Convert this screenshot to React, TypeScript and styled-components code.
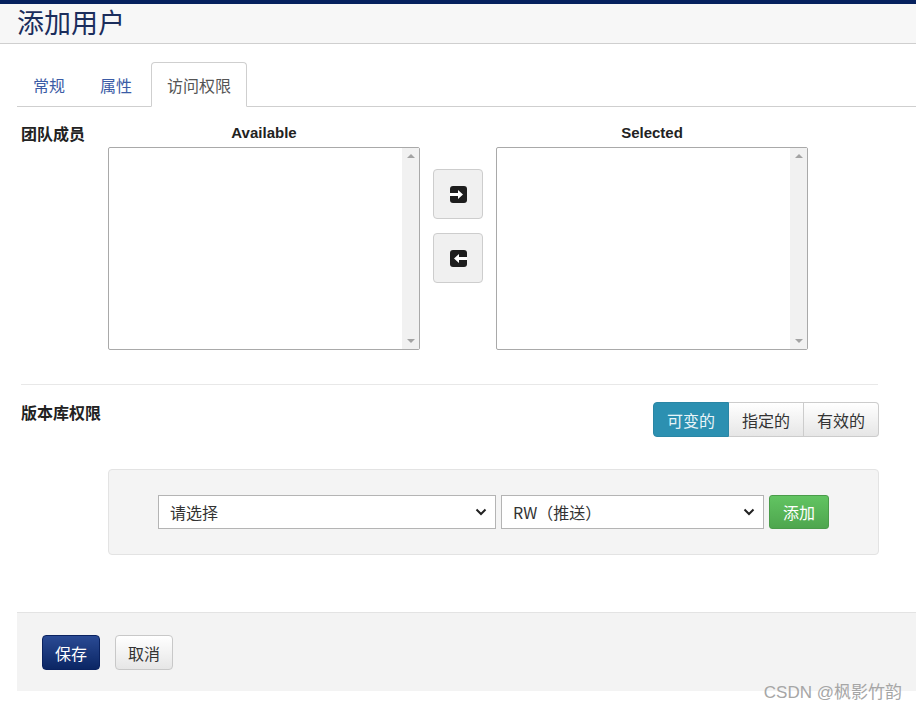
import React from "react";
import styled, { createGlobalStyle, css } from "styled-components";

const GlobalStyle = createGlobalStyle`
  html, body {
    margin: 0;
    padding: 0;
    background: #fff;
    font-family: "Liberation Sans", "Noto Sans CJK SC", sans-serif;
    color: #333;
  }
`;

const Page = styled.div`
  position: relative;
  width: 916px;
  min-height: 711px;
`;

const TopBar = styled.div`
  height: 4px;
  background: #06215e;
`;

const Header = styled.header`
  height: 39px;
  background: #f7f7f7;
  border-bottom: 1px solid #cfcfcf;
  padding-left: 17px;
  display: flex;
  align-items: center;
`;

const Title = styled.h1`
  margin: 0 0 3px;
  font-family: "Noto Sans CJK SC", sans-serif;
  font-size: 27px;
  font-weight: 400;
  line-height: 32px;
  color: #1b2d5c;
`;

const Main = styled.main`
  padding-left: 17px;
`;

const Tabs = styled.nav`
  margin-top: 18px;
  display: flex;
  border-bottom: 1px solid #cfcfcf;
`;

const Tab = styled.div<{ $active?: boolean }>`
  height: 43px;
  padding: 0 15px;
  margin-right: 3px;
  margin-bottom: -1px;
  display: flex;
  align-items: center;
  font-family: "Noto Sans CJK SC", sans-serif;
  font-size: 16px;
  color: #3b5ca6;
  border: 1px solid transparent;
  border-radius: 4px 4px 0 0;
  ${(p) =>
    p.$active &&
    css`
      color: #555;
      background: #fff;
      border-color: #cfcfcf;
      border-bottom-color: #fff;
    `}
`;

const SectionRow = styled.div`
  display: flex;
  align-items: flex-start;
  padding-top: 16px;
`;

const Label = styled.div`
  width: 87px;
  padding-left: 4px;
  font-family: "Noto Sans CJK SC", sans-serif;
  font-size: 16px;
  font-weight: 700;
  line-height: 20px;
  color: #222;
`;

const ListColumn = styled.div`
  width: 312px;
  display: flex;
  flex-direction: column;
`;

const ListTitle = styled.div`
  text-align: center;
  font-size: 15px;
  font-weight: 700;
  line-height: 20px;
  color: #222;
  margin-bottom: 4px;
`;

const ListBox = styled.div`
  height: 201px;
  border: 1px solid #a9a9a9;
  border-radius: 2px;
  background: #fff;
  display: flex;
  justify-content: flex-end;
`;

const Scrollbar = styled.div`
  width: 17px;
  background: #f1f1f1;
  display: flex;
  flex-direction: column;
  justify-content: space-between;
  align-items: center;
  padding: 6px 0;
`;

const Triangle = styled.span<{ $down?: boolean }>`
  width: 0;
  height: 0;
  border-left: 4px solid transparent;
  border-right: 4px solid transparent;
  ${(p) =>
    p.$down
      ? css`border-top: 4px solid #a3a3a3;`
      : css`border-bottom: 4px solid #a3a3a3;`}
`;

const MoveColumn = styled.div`
  width: 76px;
  display: flex;
  flex-direction: column;
  align-items: center;
  gap: 14px;
  padding-top: 46px;
`;

const MoveButton = styled.button`
  width: 50px;
  height: 50px;
  padding: 0;
  background: #f0f0f0;
  border: 1px solid #cdcdcd;
  border-radius: 4px;
  display: flex;
  align-items: center;
  justify-content: center;
`;

const Divider = styled.hr`
  margin: 34px 38px 0 4px;
  border: 0;
  border-top: 1px solid #e8e8e8;
`;

const RepoRow = styled.div`
  display: flex;
  justify-content: space-between;
  align-items: flex-start;
  padding: 17px 37px 0 0;
`;

const BtnGroup = styled.div`
  display: flex;
`;

const GroupButton = styled.button<{ $active?: boolean }>`
  height: 35px;
  padding: 0 13px;
  font-family: "Noto Sans CJK SC", sans-serif;
  font-size: 16px;
  color: #333;
  border: 1px solid #cccccc;
  border-left-width: 0;
  background: linear-gradient(#ffffff, #e6e6e6);
  &:first-child {
    border-left-width: 1px;
    border-radius: 4px 0 0 4px;
  }
  &:last-child {
    border-radius: 0 4px 4px 0;
  }
  ${(p) =>
    p.$active &&
    css`
      color: #e8f4f8;
      background: #2c90b1;
      border-color: #2a86a5;
    `}
`;

const Well = styled.div`
  margin: 32px 37px 0 91px;
  height: 84px;
  background: #f4f4f4;
  border: 1px solid #e3e3e3;
  border-radius: 4px;
  display: flex;
  align-items: center;
  justify-content: center;
  gap: 5px;
`;

const Select = styled.div<{ $width: number }>`
  width: ${(p) => p.$width}px;
  height: 34px;
  box-sizing: border-box;
  padding: 0 8px 0 11px;
  background: #fff;
  border: 1px solid #b4b4b4;
  display: flex;
  align-items: center;
  justify-content: space-between;
  font-family: "Noto Sans CJK SC", sans-serif;
  font-size: 16px;
  color: #333;
`;

const AddButton = styled.button`
  width: 60px;
  height: 34px;
  font-family: "Noto Sans CJK SC", sans-serif;
  font-size: 16px;
  color: #fff;
  background: linear-gradient(#62c462, #4ea64e);
  border: 1px solid #4a9c4a;
  border-radius: 3px;
`;

const Footer = styled.footer`
  position: relative;
  margin-top: 57px;
  height: 79px;
  background: #f3f3f3;
  border-top: 1px solid #e3e3e3;
  display: flex;
  align-items: flex-start;
  gap: 15px;
  padding: 22px 0 0 25px;
  box-sizing: border-box;
`;

const FooterButton = styled.button<{ $primary?: boolean }>`
  height: 35px;
  padding: 0 12px;
  font-family: "Noto Sans CJK SC", sans-serif;
  font-size: 16px;
  border-radius: 4px;
  color: #333;
  background: linear-gradient(#ffffff, #e6e6e6);
  border: 1px solid #c8c8c8;
  ${(p) =>
    p.$primary &&
    css`
      color: #fff;
      background: linear-gradient(#2a4a94, #0b2664);
      border-color: #0a2260;
    `}
`;

const Watermark = styled.span`
  position: absolute;
  top: 69px;
  right: 14px;
  font-family: "Liberation Sans", "Noto Sans CJK SC", sans-serif;
  font-size: 17px;
  line-height: 22px;
  color: #a6a6a6;
`;

const MoveIcon: React.FC<{ dir: "right" | "left" }> = ({ dir }) => (
  <svg width="17" height="17" viewBox="0 0 17 17">
    <rect x="0" y="0" width="17" height="17" rx="3" fill="#1d1d1d" />
    {dir === "right" ? (
      <path d="M0 7 H8 V4 L13 8.5 L8 13 V10 H0 Z" fill="#fff" />
    ) : (
      <path d="M17 7 H9 V4 L4 8.5 L9 13 V10 H17 Z" fill="#fff" />
    )}
  </svg>
);

const Chevron = () => (
  <svg width="12" height="8" viewBox="0 0 12 8">
    <path d="M1.5 1.5 L6 6 L10.5 1.5" fill="none" stroke="#222" strokeWidth="2" />
  </svg>
);

const MemberList: React.FC<{ title: string }> = ({ title }) => (
  <ListColumn>
    <ListTitle>{title}</ListTitle>
    <ListBox>
      <Scrollbar>
        <Triangle />
        <Triangle $down />
      </Scrollbar>
    </ListBox>
  </ListColumn>
);

export default function App() {
  const modes = ["可变的", "指定的", "有效的"];
  return (
    <Page>
      <GlobalStyle />
      <TopBar />
      <Header>
        <Title>添加用户</Title>
      </Header>
      <Main>
        <Tabs>
          <Tab>常规</Tab>
          <Tab>属性</Tab>
          <Tab $active>访问权限</Tab>
        </Tabs>

        <SectionRow>
          <Label>团队成员</Label>
          <MemberList title="Available" />
          <MoveColumn>
            <MoveButton>
              <MoveIcon dir="right" />
            </MoveButton>
            <MoveButton>
              <MoveIcon dir="left" />
            </MoveButton>
          </MoveColumn>
          <MemberList title="Selected" />
        </SectionRow>

        <Divider />

        <RepoRow>
          <Label>版本库权限</Label>
          <BtnGroup>
            {modes.map((m, i) => (
              <GroupButton key={m} $active={i === 0}>
                {m}
              </GroupButton>
            ))}
          </BtnGroup>
        </RepoRow>

        <Well>
          <Select $width={338}>
            <span>请选择</span>
            <Chevron />
          </Select>
          <Select $width={263}>
            <span>RW（推送）</span>
            <Chevron />
          </Select>
          <AddButton>添加</AddButton>
        </Well>

        <Footer>
          <FooterButton $primary>保存</FooterButton>
          <FooterButton>取消</FooterButton>
          <Watermark>CSDN @枫影竹韵</Watermark>
        </Footer>
      </Main>
    </Page>
  );
}
